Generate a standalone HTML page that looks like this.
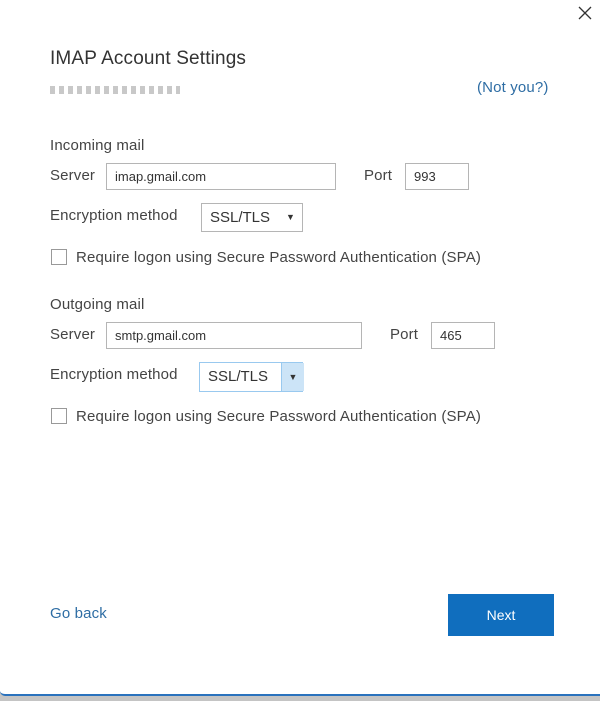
<!DOCTYPE html>
<html><head><style>
body{margin:0;width:600px;height:701px;background:#c4c4c4;position:relative;overflow:hidden;font-family:"Segoe UI","Liberation Sans",sans-serif;}
.win{position:absolute;left:0;top:0;width:600px;height:694px;background:#fff;border-bottom:2px solid #2a72bd;border-bottom-left-radius:5px;}
.t{position:absolute;color:#444;font-size:15px;white-space:nowrap;letter-spacing:0.15px;}
.in{position:absolute;border:1px solid #b5b5b5;background:#fff;box-sizing:border-box;font-size:13px;color:#333;padding:5px 0 0 8px;}
.cb{position:absolute;width:16px;height:16px;border:1px solid #999;box-sizing:border-box;}
</style></head><body>
<div class="win">
<svg style="position:absolute;left:578px;top:6px" width="14" height="14"><path d="M1 1L13 13M13 1L1 13" stroke="#333" stroke-width="1.3"/></svg>
<div class="t" style="left:50px;top:48px;font-size:19px;color:#333">IMAP Account Settings</div>
<div style="position:absolute;left:50px;top:86px;width:130px;height:8px;background:repeating-linear-gradient(90deg,#bbb 0 5px,#fff 5px 9px);opacity:.8"></div>
<div class="t" style="left:477px;top:79px;color:#2e6da4">(Not you?)</div>
<div class="t" style="left:50px;top:137px">Incoming mail</div>
<div class="t" style="left:50px;top:167px">Server</div>
<div class="in" style="left:106px;top:163px;width:230px;height:27px">imap.gmail.com</div>
<div class="t" style="left:364px;top:167px">Port</div>
<div class="in" style="left:405px;top:163px;width:64px;height:27px">993</div>
<div class="t" style="left:50px;top:207px">Encryption method</div>
<div class="in" style="left:201px;top:203px;width:102px;height:29px;font-size:15px;padding-top:5px">SSL/TLS<span style="position:absolute;left:84px;top:8px;font-size:9px">▼</span></div>
<div class="cb" style="left:51px;top:249px"></div>
<div class="t" style="left:76px;top:249px">Require logon using Secure Password Authentication (SPA)</div>
<div class="t" style="left:50px;top:296px">Outgoing mail</div>
<div class="t" style="left:50px;top:326px">Server</div>
<div class="in" style="left:106px;top:322px;width:256px;height:27px">smtp.gmail.com</div>
<div class="t" style="left:390px;top:326px">Port</div>
<div class="in" style="left:431px;top:322px;width:64px;height:27px">465</div>
<div class="t" style="left:50px;top:366px">Encryption method</div>
<div class="in" style="left:199px;top:362px;width:104px;height:30px;font-size:15px;border-color:#99c9ef;padding-top:5px">SSL/TLS<span style="position:absolute;left:81px;top:0;width:22px;height:28px;background:#cce4f7;border-left:1px solid #99c9ef;font-size:9px;text-align:center;line-height:28px">▼</span></div>
<div class="cb" style="left:51px;top:408px"></div>
<div class="t" style="left:76px;top:408px">Require logon using Secure Password Authentication (SPA)</div>
<div class="t" style="left:50px;top:605px;color:#2e6da4">Go back</div>
<div style="position:absolute;left:448px;top:594px;width:106px;height:42px;background:#106ebe;color:#fff;font-size:14px;text-align:center;line-height:42px">Next</div>
</div>
</body></html>
